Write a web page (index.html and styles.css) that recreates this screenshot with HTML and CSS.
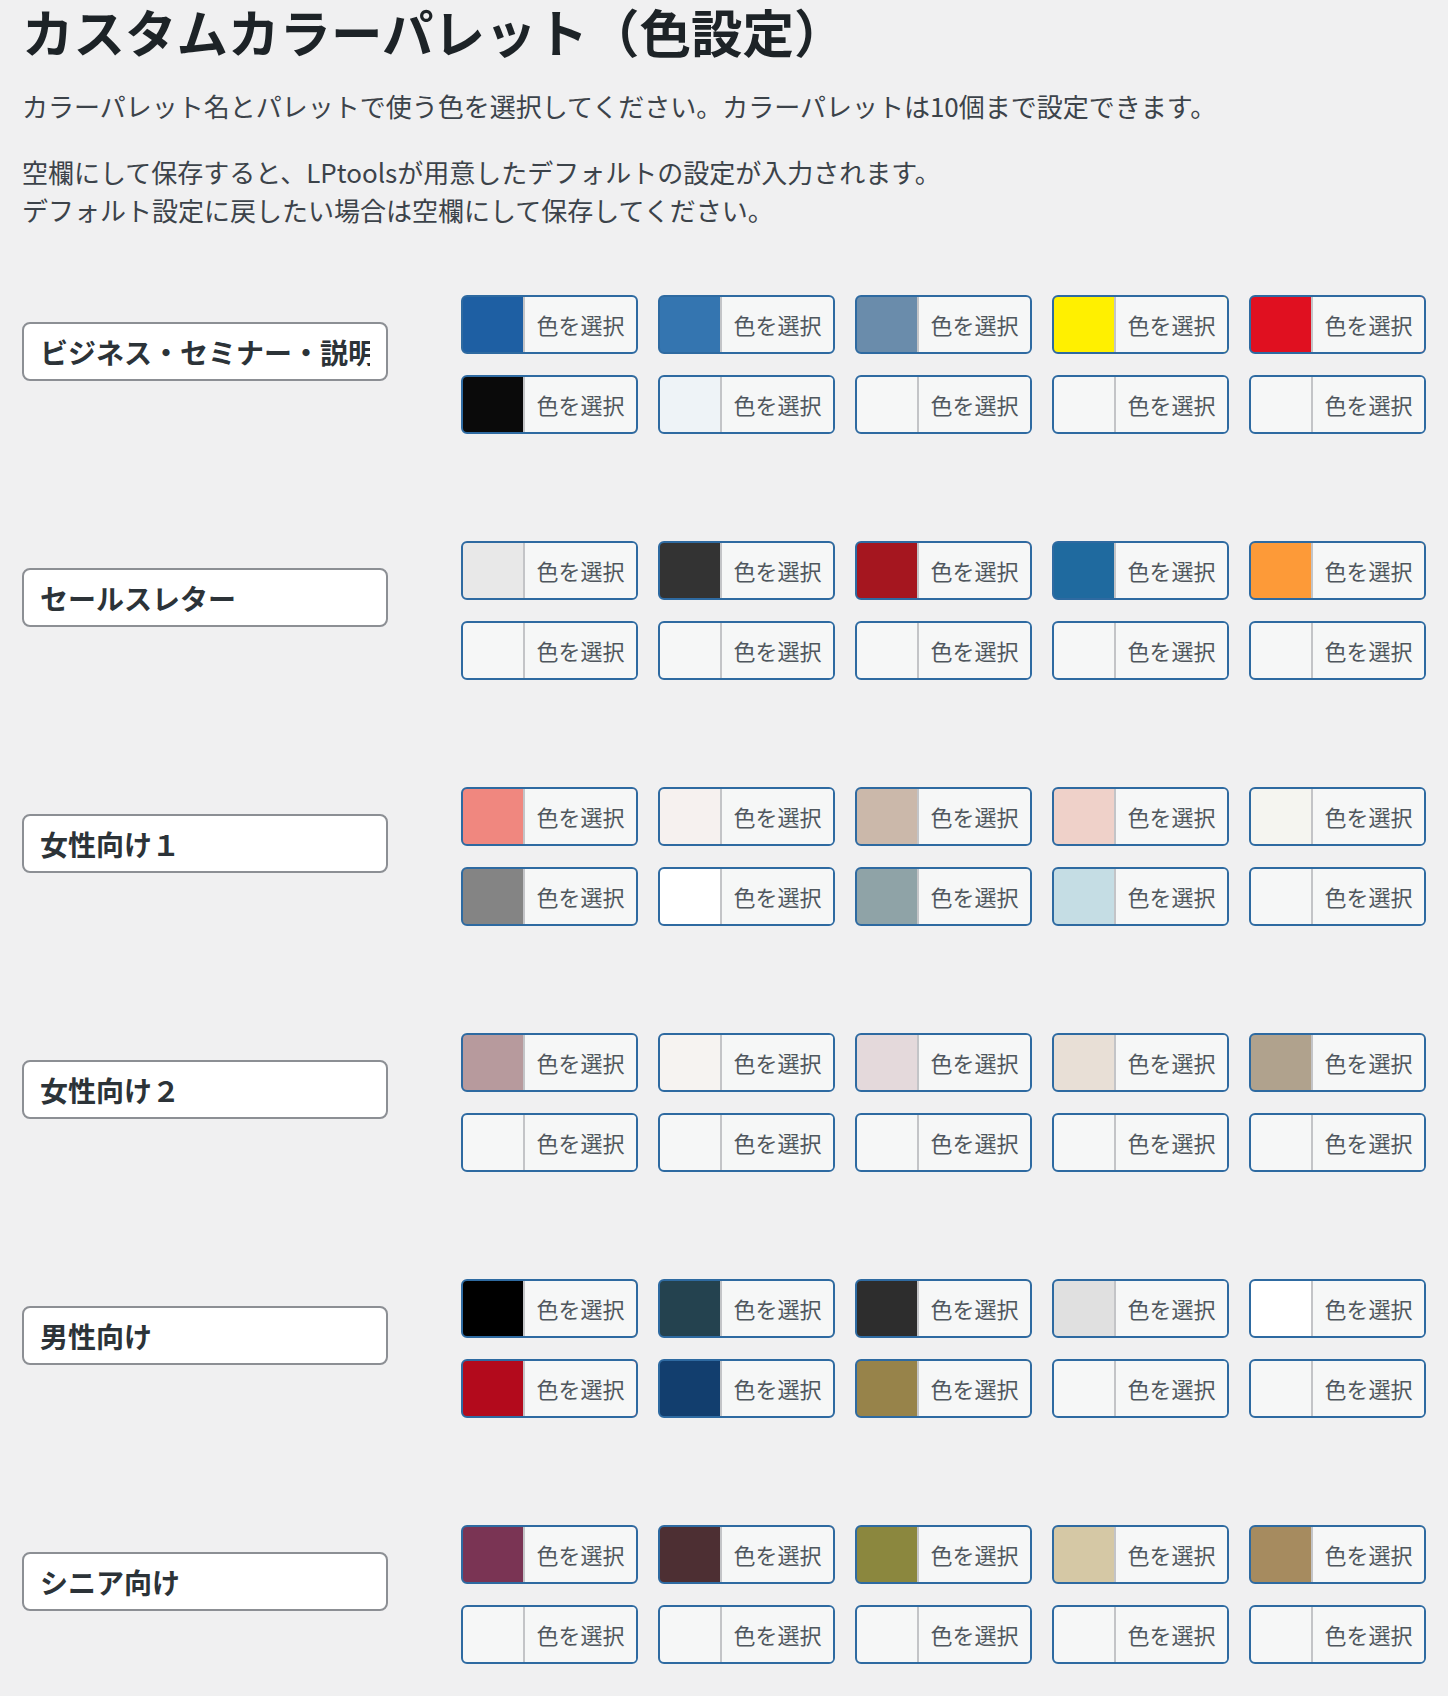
FILE: index.html
```html
<!DOCTYPE html>
<html lang="ja">
<head>
<meta charset="utf-8">
<title>カスタムカラーパレット（色設定）</title>
<link rel="stylesheet" href="styles.css">
</head>
<body>
<div class="wrap">
  <h1 class="title">カスタムカラーパレット（色設定<span class="paren-close">）</span></h1>
  <p class="desc desc-first">カラーパレット名とパレットで使う色を選択してください。カラーパレットは10個まで設定できます。</p>
  <p class="desc desc-second">空欄にして保存すると、LPtoolsが用意したデフォルトの設定が入力されます。<br>デフォルト設定に戻したい場合は空欄にして保存してください。</p>

  <div class="palettes">
    <div class="palette">
      <div class="palette-name"><input class="name-input" type="text" value="ビジネス・セミナー・説明会"></div>
      <div class="swatches">
        <button type="button" class="color-btn" style="background-color:#1e5fa3"><span class="color-text">色を選択</span></button>
        <button type="button" class="color-btn" style="background-color:#3475b0"><span class="color-text">色を選択</span></button>
        <button type="button" class="color-btn" style="background-color:#6a8cab"><span class="color-text">色を選択</span></button>
        <button type="button" class="color-btn" style="background-color:#fff000"><span class="color-text">色を選択</span></button>
        <button type="button" class="color-btn" style="background-color:#e01020"><span class="color-text">色を選択</span></button>
        <button type="button" class="color-btn" style="background-color:#0a0a0a"><span class="color-text">色を選択</span></button>
        <button type="button" class="color-btn" style="background-color:#eef3f7"><span class="color-text">色を選択</span></button>
        <button type="button" class="color-btn"><span class="color-text">色を選択</span></button>
        <button type="button" class="color-btn"><span class="color-text">色を選択</span></button>
        <button type="button" class="color-btn"><span class="color-text">色を選択</span></button>
      </div>
    </div>

    <div class="palette">
      <div class="palette-name"><input class="name-input" type="text" value="セールスレター"></div>
      <div class="swatches">
        <button type="button" class="color-btn" style="background-color:#e8e8e8"><span class="color-text">色を選択</span></button>
        <button type="button" class="color-btn" style="background-color:#333333"><span class="color-text">色を選択</span></button>
        <button type="button" class="color-btn" style="background-color:#a5161f"><span class="color-text">色を選択</span></button>
        <button type="button" class="color-btn" style="background-color:#1f6a9f"><span class="color-text">色を選択</span></button>
        <button type="button" class="color-btn" style="background-color:#fd9a38"><span class="color-text">色を選択</span></button>
        <button type="button" class="color-btn"><span class="color-text">色を選択</span></button>
        <button type="button" class="color-btn"><span class="color-text">色を選択</span></button>
        <button type="button" class="color-btn"><span class="color-text">色を選択</span></button>
        <button type="button" class="color-btn"><span class="color-text">色を選択</span></button>
        <button type="button" class="color-btn"><span class="color-text">色を選択</span></button>
      </div>
    </div>

    <div class="palette">
      <div class="palette-name"><input class="name-input" type="text" value="女性向け１"></div>
      <div class="swatches">
        <button type="button" class="color-btn" style="background-color:#f0877f"><span class="color-text">色を選択</span></button>
        <button type="button" class="color-btn" style="background-color:#f6f1ef"><span class="color-text">色を選択</span></button>
        <button type="button" class="color-btn" style="background-color:#cbb8aa"><span class="color-text">色を選択</span></button>
        <button type="button" class="color-btn" style="background-color:#efd1c9"><span class="color-text">色を選択</span></button>
        <button type="button" class="color-btn" style="background-color:#f5f5f0"><span class="color-text">色を選択</span></button>
        <button type="button" class="color-btn" style="background-color:#848484"><span class="color-text">色を選択</span></button>
        <button type="button" class="color-btn" style="background-color:#ffffff"><span class="color-text">色を選択</span></button>
        <button type="button" class="color-btn" style="background-color:#8fa3a7"><span class="color-text">色を選択</span></button>
        <button type="button" class="color-btn" style="background-color:#c5dde4"><span class="color-text">色を選択</span></button>
        <button type="button" class="color-btn"><span class="color-text">色を選択</span></button>
      </div>
    </div>

    <div class="palette">
      <div class="palette-name"><input class="name-input" type="text" value="女性向け２"></div>
      <div class="swatches">
        <button type="button" class="color-btn" style="background-color:#b79a9d"><span class="color-text">色を選択</span></button>
        <button type="button" class="color-btn" style="background-color:#f6f3f1"><span class="color-text">色を選択</span></button>
        <button type="button" class="color-btn" style="background-color:#e4d9db"><span class="color-text">色を選択</span></button>
        <button type="button" class="color-btn" style="background-color:#e8dfd6"><span class="color-text">色を選択</span></button>
        <button type="button" class="color-btn" style="background-color:#b0a28d"><span class="color-text">色を選択</span></button>
        <button type="button" class="color-btn"><span class="color-text">色を選択</span></button>
        <button type="button" class="color-btn"><span class="color-text">色を選択</span></button>
        <button type="button" class="color-btn"><span class="color-text">色を選択</span></button>
        <button type="button" class="color-btn"><span class="color-text">色を選択</span></button>
        <button type="button" class="color-btn"><span class="color-text">色を選択</span></button>
      </div>
    </div>

    <div class="palette">
      <div class="palette-name"><input class="name-input" type="text" value="男性向け"></div>
      <div class="swatches">
        <button type="button" class="color-btn" style="background-color:#000000"><span class="color-text">色を選択</span></button>
        <button type="button" class="color-btn" style="background-color:#24424f"><span class="color-text">色を選択</span></button>
        <button type="button" class="color-btn" style="background-color:#2d2d2d"><span class="color-text">色を選択</span></button>
        <button type="button" class="color-btn" style="background-color:#e0e0e0"><span class="color-text">色を選択</span></button>
        <button type="button" class="color-btn" style="background-color:#ffffff"><span class="color-text">色を選択</span></button>
        <button type="button" class="color-btn" style="background-color:#b30a1c"><span class="color-text">色を選択</span></button>
        <button type="button" class="color-btn" style="background-color:#123e6e"><span class="color-text">色を選択</span></button>
        <button type="button" class="color-btn" style="background-color:#97834a"><span class="color-text">色を選択</span></button>
        <button type="button" class="color-btn"><span class="color-text">色を選択</span></button>
        <button type="button" class="color-btn"><span class="color-text">色を選択</span></button>
      </div>
    </div>

    <div class="palette">
      <div class="palette-name"><input class="name-input" type="text" value="シニア向け"></div>
      <div class="swatches">
        <button type="button" class="color-btn" style="background-color:#7a3454"><span class="color-text">色を選択</span></button>
        <button type="button" class="color-btn" style="background-color:#4d2f33"><span class="color-text">色を選択</span></button>
        <button type="button" class="color-btn" style="background-color:#8b873e"><span class="color-text">色を選択</span></button>
        <button type="button" class="color-btn" style="background-color:#d5c8a5"><span class="color-text">色を選択</span></button>
        <button type="button" class="color-btn" style="background-color:#a68b5f"><span class="color-text">色を選択</span></button>
        <button type="button" class="color-btn"><span class="color-text">色を選択</span></button>
        <button type="button" class="color-btn"><span class="color-text">色を選択</span></button>
        <button type="button" class="color-btn"><span class="color-text">色を選択</span></button>
        <button type="button" class="color-btn"><span class="color-text">色を選択</span></button>
        <button type="button" class="color-btn"><span class="color-text">色を選択</span></button>
      </div>
    </div>
  </div>
</div>
</body>
</html>
```

FILE: styles.css
```css
html, body {
  margin: 0;
  padding: 0;
}

body {
  background: #f0f0f1;
  color: #3c434a;
  font-family: "Noto Sans CJK JP", "Noto Sans", sans-serif;
  min-height: 1696px;
}

.wrap {
  padding: 0 0 0 22px;
}

.title {
  margin: 0;
  font-size: 51.5px;
  line-height: 61px;
  font-weight: 700;
  color: #1d2327;
}

.paren-close {
  font-feature-settings: "halt";
}

.desc {
  margin: 0;
  font-size: 26px;
  line-height: 38px;
}

.desc-first {
  margin-top: 25.5px;
}

.desc-second {
  margin-top: 28px;
}

.palettes {
  margin-top: 66.5px;
  display: flex;
  flex-direction: column;
  gap: 107px;
}

.palette {
  display: flex;
}

.palette-name {
  flex: none;
  width: 439px;
  padding-top: 27px;
}

.name-input {
  display: block;
  box-sizing: border-box;
  width: 366px;
  height: 59px;
  margin: 0;
  padding: 0 16px;
  border: 2px solid #8c8f94;
  border-radius: 8px;
  background: #fff;
  color: #2c3338;
  font-family: "Noto Sans CJK JP", sans-serif;
  font-size: 28px;
  font-weight: 700;
  outline: none;
}

.swatches {
  display: grid;
  grid-template-columns: repeat(5, 177px);
  column-gap: 20px;
  row-gap: 21px;
}

.color-btn {
  display: flex;
  box-sizing: border-box;
  width: 177px;
  height: 59px;
  margin: 0;
  padding: 0 0 0 60px;
  border: 2px solid #2e6aa1;
  border-radius: 6px;
  background-color: #f6f7f7;
  font-family: inherit;
  cursor: pointer;
}

.color-text {
  flex: 1;
  display: block;
  background: #f6f7f7;
  border-left: 2px solid #c3c4c7;
  border-radius: 0 4px 4px 0;
  color: #50575e;
  font-size: 22px;
  line-height: 55px;
  text-align: center;
  white-space: nowrap;
}
```
